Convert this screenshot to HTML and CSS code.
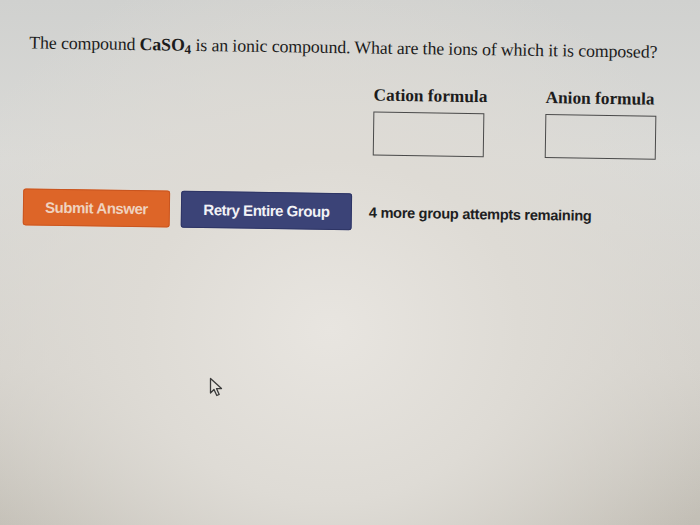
FILE: index.html
```html
<!DOCTYPE html>
<html>
<head>
<meta charset="utf-8">
<link rel="stylesheet" href="styles.css">
</head>
<body>
<div class="screen">
  <div class="page">
    <p class="question">The compound <b>CaSO<sub>4</sub></b> is an ionic compound. What are the ions of which it is composed?</p>
    <div class="answers">
      <div class="field">
        <div class="label">Cation formula</div>
        <div class="box"></div>
      </div>
      <div class="field">
        <div class="label">Anion formula</div>
        <div class="box"></div>
      </div>
    </div>
    <div class="actions">
      <button class="btn submit">Submit Answer</button>
      <button class="btn retry">Retry Entire Group</button>
      <span class="remaining">4 more group attempts remaining</span>
    </div>
  </div>
  <svg class="cursor" width="16" height="22" viewBox="0 0 16 22">
    <path d="M1.5 1.5 L1.5 16 L5 12.5 L7.8 18.5 L10.2 17.4 L7.5 11.6 L12.5 11.6 Z" fill="#e4e2dc" stroke="#3a3a3a" stroke-width="1.3" stroke-linejoin="round"/>
  </svg>
</div>
</body>
</html>
```

FILE: styles.css
```css
html, body {
  margin: 0;
  padding: 0;
  width: 700px;
  height: 525px;
  overflow: hidden;
}
.screen {
  position: relative;
  width: 700px;
  height: 525px;
  background:
    radial-gradient(ellipse 420px 380px at 330px 330px, #e8e5e0 0%, #dedbd5 45%, rgba(214,212,206,0) 100%),
    linear-gradient(180deg, #d0d1cf 0%, #dadad7 30%, #d4d1cb 70%, #c2beb5 100%);
  font-family: "Liberation Serif", "Times New Roman", serif;
  color: #1c1c1c;
}
.page {
  padding: 32px 0 0 30px;
  transform: rotate(0.85deg);
  transform-origin: 0 0;
}
.question {
  margin: 0;
  font-size: 17.8px;
  line-height: 20px;
  letter-spacing: -0.1px;
}
.question sub {
  font-size: 13px;
  vertical-align: -3px;
  line-height: 0;
}
.answers {
  display: flex;
  gap: 60px;
  margin: 29px 0 0 345px;
}
.field {
  width: 112px;
}
.label {
  font-weight: bold;
  font-size: 17.3px;
  line-height: 18px;
  white-space: nowrap;
}
.box {
  margin-top: 7px;
  width: 109px;
  height: 42px;
  border: 1.5px solid #4a4a4a;
  background: transparent;
}
.actions {
  display: flex;
  align-items: center;
  margin: 38px 0 0 -4px;
  font-family: "Liberation Sans", Arial, sans-serif;
}
.btn {
  font-family: "Liberation Sans", Arial, sans-serif;
  font-weight: bold;
  font-size: 15px;
  border-radius: 3px;
  border: none;
  height: 37px;
  padding: 0;
  letter-spacing: -0.45px;
}
.submit {
  width: 147px;
  background: #dd6528;
  color: #efd2bf;
  box-shadow: inset 0 0 0 1px #c85520;
}
.retry {
  width: 171px;
  margin-left: 11px;
  background: #3b4377;
  color: #f2f2f6;
  box-shadow: inset 0 0 0 1px #2e3565;
}
.remaining {
  margin-left: 17px;
  font-weight: bold;
  font-size: 14.6px;
  color: #1e1e22;
  letter-spacing: -0.3px;
}
.cursor {
  position: absolute;
  left: 209px;
  top: 377px;
}
```
